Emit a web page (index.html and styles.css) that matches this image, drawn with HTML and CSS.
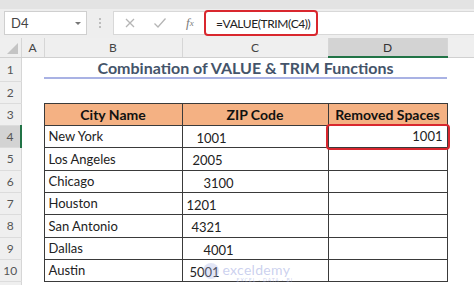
FILE: index.html
```html
<!DOCTYPE html>
<html>
<head>
    <meta name="viewport" content="width=device-width, initial-scale=1">
    <link rel="stylesheet" href="styles.css">
</head>
<body>
    <div class="window">

        <div class="formula-bar">
            <div class="name-box">
                <span>D4</span>
                <span class="drop"></span>
            </div>
            <div class="grip">
                <i></i><i></i><i></i>
            </div>
            <div class="fn-buttons">
                <span class="fn-icon">
                    <svg width="12" height="12" viewBox="0 0 12 12"><path d="M2 2 L10 10 M10 2 L2 10" stroke="#b5b5b5" stroke-width="1.3" fill="none"/></svg>
                </span>
                <span class="fn-icon">
                    <svg width="14" height="12" viewBox="0 0 14 12"><path d="M1.5 6.5 L5 10 L12.5 1.5" stroke="#b5b5b5" stroke-width="1.3" fill="none"/></svg>
                </span>
                <span class="fn-icon fx">f<sub>x</sub></span>
            </div>
            <div class="formula-input">
                <span class="formula-text">=VALUE(TRIM(C4))</span>
                <span class="mark formula-mark"></span>
            </div>
        </div>

        <table class="sheet">
            <colgroup>
                <col class="c-rh">
                <col class="c-a">
                <col class="c-b">
                <col class="c-c">
                <col class="c-d">
                <col>
            </colgroup>
            <tr class="col-head">
                <th class="corner"><span class="tri"></span></th>
                <th>A</th>
                <th>B</th>
                <th>C</th>
                <th class="active">D</th>
                <th class="last"></th>
            </tr>
            <tr class="r22">
                <td class="rh">1</td>
                <td></td>
                <td colspan="3" class="title"><span>Combination of VALUE &amp; TRIM Functions</span></td>
                <td></td>
            </tr>
            <tr class="r21">
                <td class="rh">2</td>
                <td></td><td></td><td></td><td></td><td></td>
            </tr>
            <tr class="r21">
                <td class="rh">3</td>
                <td></td>
                <td class="b th">City Name</td>
                <td class="b th">ZIP Code</td>
                <td class="b th">Removed Spaces</td>
                <td></td>
            </tr>
            <tr class="r21">
                <td class="rh active">4</td>
                <td></td>
                <td class="b">New York</td>
                <td class="b"><span class="zip" style="padding-left: 10px">1001</span></td>
                <td class="b num selected">1001<span class="mark cell-mark"></span></td>
                <td></td>
            </tr>
            <tr class="r22">
                <td class="rh">5</td>
                <td></td>
                <td class="b">Los Angeles</td>
                <td class="b"><span class="zip" style="padding-left: 6px">2005</span></td>
                <td class="b"></td>
                <td></td>
            </tr>
            <tr class="r21">
                <td class="rh">6</td>
                <td></td>
                <td class="b">Chicago</td>
                <td class="b"><span class="zip" style="padding-left: 17px">3100</span></td>
                <td class="b"></td>
                <td></td>
            </tr>
            <tr class="r21">
                <td class="rh">7</td>
                <td></td>
                <td class="b">Houston</td>
                <td class="b"><span class="zip" style="padding-left: 0">1201</span></td>
                <td class="b"></td>
                <td></td>
            </tr>
            <tr class="r22">
                <td class="rh">8</td>
                <td></td>
                <td class="b">San Antonio</td>
                <td class="b"><span class="zip" style="padding-left: 5px">4321</span></td>
                <td class="b"></td>
                <td></td>
            </tr>
            <tr class="r21">
                <td class="rh">9</td>
                <td></td>
                <td class="b">Dallas</td>
                <td class="b"><span class="zip" style="padding-left: 17px">4001</span></td>
                <td class="b"></td>
                <td></td>
            </tr>
            <tr class="r21">
                <td class="rh">10</td>
                <td></td>
                <td class="b">Austin</td>
                <td class="b wm-cell">
                    <span class="zip" style="padding-left: 3px">5001</span>
                    <span class="watermark">
                        <span class="wm-logo"></span>
                        <span class="wm-text">exceldemy<small>EXCEL · DATA · BI</small></span>
                    </span>
                </td>
                <td class="b"></td>
                <td></td>
            </tr>
            <tr class="r-rest">
                <td class="rh"></td>
                <td></td><td></td><td></td><td></td><td></td>
            </tr>
        </table>

    </div>
</body>
</html>
```

FILE: styles.css
```css
html, body {
    margin: 0;
    height: 100%;
    overflow: hidden;
}

body {
    background-color: #ffffff;
    font-family: Lato, "Liberation Sans", sans-serif;
    color: #222;
}

.window {
    width: 474px;
    height: 285px;
    overflow: hidden;
    background-color: #ffffff;
}

/* formula bar */
.formula-bar {
    height: 38px;
    box-sizing: border-box;
    background-color: #eeeeee;
    border-top: 9px solid #e3e3e3;
    padding-top: 2px;
    display: flex;
    align-items: flex-start;
}

.name-box {
    margin-left: 4px;
    width: 83px;
    height: 24px;
    box-sizing: border-box;
    background-color: #fff;
    border: 1px solid #cfcfcf;
    display: flex;
    align-items: center;
    justify-content: space-between;
    padding: 0 5px 0 6px;
    font-size: 13px;
    color: #444;
}

.drop {
    width: 0;
    height: 0;
    border-left: 3px solid transparent;
    border-right: 3px solid transparent;
    border-top: 3px solid #777;
}

.grip {
    width: 26px;
    height: 24px;
    display: flex;
    flex-direction: column;
    align-items: center;
    justify-content: center;
    gap: 2px;
}

.grip i {
    width: 2px;
    height: 2px;
    background-color: #bdbdbd;
}

.fn-buttons {
    width: 92px;
    height: 24px;
    box-sizing: border-box;
    background-color: #fff;
    border: 1px solid #d8d8d8;
    border-right: none;
    display: flex;
    align-items: center;
    padding-left: 10px;
    gap: 17px;
}

.fn-icon {
    display: flex;
    align-items: center;
    color: #9a9a9a;
}

.fx {
    font-family: "Liberation Serif", serif;
    font-style: italic;
    font-size: 13px;
    color: #7a7a7a;
    margin-left: 2px;
}

.fx sub {
    font-size: 9px;
}

.formula-input {
    flex: 1;
    height: 24px;
    box-sizing: border-box;
    background-color: #fff;
    border: 1px solid #d8d8d8;
    border-right: none;
    position: relative;
    display: flex;
    align-items: center;
    padding-left: 10px;
    font-size: 12px;
    letter-spacing: -0.4px;
}

.mark {
    position: absolute;
    border: 2.5px solid #d9272e;
    border-radius: 4px;
    box-sizing: border-box;
}

.formula-mark {
    left: -2px;
    top: -2px;
    width: 114px;
    height: 26px;
}

/* sheet grid */
.sheet {
    border-collapse: collapse;
    table-layout: fixed;
    width: 474px;
    font-size: 13px;
}

.c-rh { width: 21px; }
.c-a { width: 23px; }
.c-b { width: 138px; }
.c-c { width: 146px; }
.c-d { width: 119px; }

.sheet td, .sheet th {
    padding: 0;
    overflow: visible;
    white-space: nowrap;
}

.col-head th {
    height: 18px;
    background-color: #efefef;
    border-right: 1px solid #d6d6d6;
    border-bottom: 1px solid #d0d0d0;
    font-weight: normal;
    font-size: 12px;
    color: #444;
    text-align: center;
}

.col-head th.active {
    background-color: #d3d3d3;
    border-bottom: 2px solid #217346;
    color: #333;
}

.col-head th.last {
    border-right: none;
}

.corner {
    position: relative;
}

.tri {
    position: absolute;
    right: 3px;
    bottom: 3px;
    width: 0;
    height: 0;
    border-left: 11px solid transparent;
    border-bottom: 11px solid #c4c4c4;
}

.r21 td { height: 21px; }
.r22 td { height: 22px; }
.r-rest td { height: 18px; }

.rh {
    background-color: #efefef;
    border-right: 1px solid #d6d6d6;
    border-bottom: 1px solid #dcdcdc;
    text-align: center;
    font-size: 12px;
    color: #555;
}

.rh.active {
    background-color: #d3d3d3;
    border-right: 2px solid #217346;
}

.title {
    text-align: center;
    vertical-align: bottom;
    position: relative;
}

.title span {
    display: block;
    font-size: 16px;
    font-weight: bold;
    color: #44546a;
    line-height: 19px;
    border-bottom: 2px solid #a9b2e4;
    margin-bottom: 2px;
}

.b {
    border: 1px solid #3a3a3a;
    padding: 0 4px !important;
    vertical-align: middle;
}

.th {
    background-color: #f4b183;
    font-weight: bold;
    font-size: 14px;
    text-align: center;
    color: #111;
}

.zip {
    display: inline-block;
    margin-top: 3px;
}

.num {
    text-align: right;
}

.selected {
    position: relative;
}

.cell-mark {
    left: -3px;
    top: -2px;
    right: -3px;
    bottom: -3px;
}

.wm-cell {
    position: relative;
}

.watermark {
    position: absolute;
    left: 20px;
    top: 2px;
    display: flex;
    align-items: flex-start;
    gap: 4px;
    pointer-events: none;
}

.wm-logo {
    width: 16px;
    height: 16px;
    border-radius: 50%;
    background-color: rgba(170, 180, 230, 0.35);
    margin-top: 1px;
}

.wm-text {
    display: flex;
    flex-direction: column;
    font-size: 14px;
    line-height: 15px;
    color: rgba(160, 170, 225, 0.55);
    letter-spacing: 0.3px;
}

.wm-text small {
    font-size: 5px;
    line-height: 5px;
    margin-top: 1px;
    letter-spacing: 1px;
    padding-left: 14px;
}
```
